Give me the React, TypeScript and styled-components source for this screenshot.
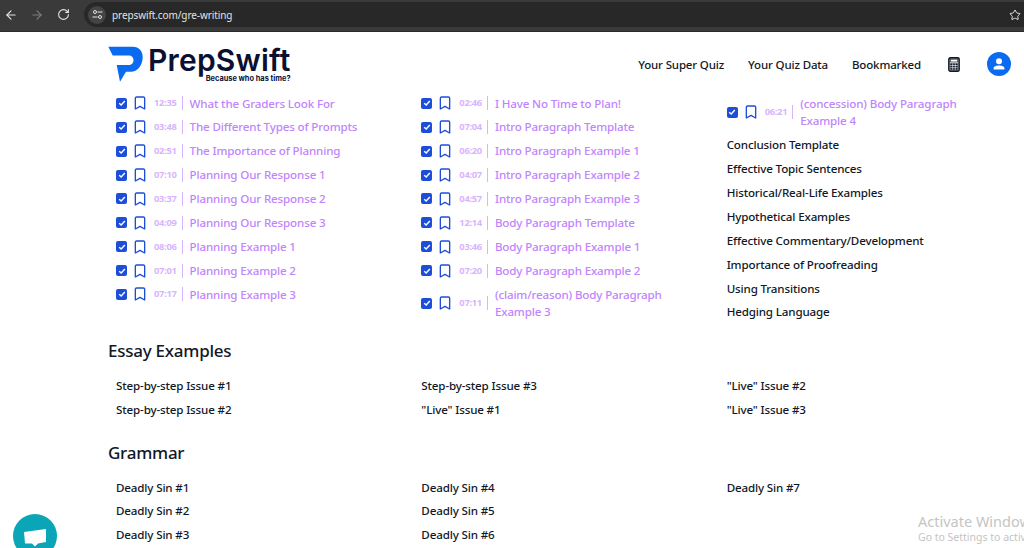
import styled, { createGlobalStyle } from 'styled-components';
import { ArrowLeft, ArrowRight, Bookmark, RotateCw, Star } from 'lucide-react';

interface Lesson {
  time: string;
  title: string;
}

const GlobalStyle = createGlobalStyle`
  html, body {
    margin: 0;
    padding: 0;
    height: 548px;
    overflow: hidden;
    background: #fff;
    font-family: "Noto Sans", "Open Sans", sans-serif;
  }
`;

const BrowserBar = styled.div`
  height: 32px;
  box-sizing: border-box;
  background: #3a3a3a;
  border-bottom: 1px solid #2a2a2a;
  display: flex;
  align-items: stretch;
  padding: 2px 0 4px;
  color: #e3e3e3;
`;

const BarIcon = styled.span<{ $dim?: boolean }>`
  width: 26px;
  padding-right: 4px;
  box-sizing: border-box;
  display: flex;
  align-items: center;
  justify-content: center;
  color: ${(p) => (p.$dim ? '#7c7c7c' : '#e3e3e3')};
`;

const Address = styled.div`
  flex: 1;
  margin-left: 6px;
  background: #282828;
  border-radius: 13px 0 0 13px;
  display: flex;
  align-items: center;
  padding-left: 4px;
  font-size: 10px;
  letter-spacing: -0.1px;
  color: #e3e3e3;
`;

const SiteInfo = styled.span`
  width: 18px;
  height: 18px;
  border-radius: 50%;
  background: #444;
  display: flex;
  align-items: center;
  justify-content: center;
  margin-right: 6px;
`;

const StarBox = styled.span`
  margin-left: auto;
  width: 18px;
  display: flex;
  justify-content: center;
`;

const Page = styled.div`
  padding-left: 108px;
`;

const Header = styled.header`
  height: 59.5px;
  display: flex;
  align-items: flex-start;
  justify-content: space-between;
  padding-right: 13px;
`;

const Logo = styled.div`
  display: flex;
  align-items: flex-start;
  margin-top: 13px;

  svg {
    margin-top: 1px;
  }
`;

const LogoText = styled.div`
  margin-left: 5px;
  display: flex;
  flex-direction: column;
  align-items: flex-end;
`;

const LogoName = styled.span`
  font-family: Inter, sans-serif;
  font-size: 30px;
  line-height: 30px;
  font-weight: 600;
  letter-spacing: 0.2px;
  color: #0b1033;
`;

const LogoTag = styled.span`
  font-family: Inter, sans-serif;
  font-size: 7.4px;
  line-height: 7px;
  font-weight: 700;
  color: #0b1033;
`;

const Nav = styled.nav`
  margin-top: 20px;
  display: flex;
  align-items: center;
  gap: 24px;
  font-size: 11.5px;
  letter-spacing: -0.15px;
  font-weight: 500;
  color: #111827;
`;

const CalcBox = styled.span`
  width: 18px;
  display: flex;
  justify-content: center;
`;

const Avatar = styled.span`
  width: 24px;
  height: 24px;
  border-radius: 50%;
  background: #0b6bf0;
  display: flex;
  align-items: center;
  justify-content: center;
`;

const Columns = styled.div`
  display: grid;
  grid-template-columns: repeat(3, 305.33px);
  padding-left: 8px;
`;

const Row = styled.div`
  display: flex;
  align-items: center;
  padding: 3px 0;
  font-size: 11.6px;
  letter-spacing: -0.15px;
  line-height: 17.875px;
  font-weight: 500;
  color: #111827;
`;

const Check = styled.span`
  width: 11px;
  height: 11px;
  border-radius: 2px;
  background: #1d4ed8;
  flex-shrink: 0;
  display: flex;
  align-items: center;
  justify-content: center;
`;

const Mark = styled(Bookmark)`
  margin-left: 5px;
  color: #1d4ed8;
  flex-shrink: 0;
`;

const Time = styled.span`
  margin-left: 6px;
  font-size: 9.4px;
  letter-spacing: -0.3px;
  font-weight: 700;
  color: #d8b4fe;
  padding-right: 5px;
  line-height: 14px;
  border-right: 1px solid #d8b4fe;
  flex-shrink: 0;
`;

const Title = styled.span`
  margin-left: 7px;
  max-width: 190px;
  color: #c084fc;
`;

const Heading = styled.h2`
  margin: 0;
  font-size: 17px;
  letter-spacing: -0.25px;
  line-height: 24px;
  font-weight: 500;
  color: #111827;
`;

const Section = styled.section`
  margin-top: 14.5px;

  & + & {
    margin-top: 19px;
  }
`;

const SectionRows = styled(Columns)`
  margin-top: 11px;
`;

const ChatBubble = styled.div`
  position: absolute;
  left: 13px;
  top: 514px;
  width: 44px;
  height: 44px;
  border-radius: 50%;
  background: #0aa5b7;
  display: flex;
  justify-content: center;
  padding-top: 15px;
  box-sizing: border-box;
`;

const Watermark = styled.div`
  position: absolute;
  left: 918px;
  right: 0;
  top: 512px;
  overflow: hidden;
  white-space: nowrap;
  color: #c4c4c4;
  font-size: 14.5px;
  line-height: 18px;

  small {
    display: block;
    font-size: 10.5px;
    line-height: 15px;
  }
`;

const LessonRow = ({ time, title }: Lesson) => (
  <Row>
    <Check>
      <svg width="8" height="8" viewBox="0 0 8 8" fill="none">
        <path d="M1.2 4.2 3.2 6 6.8 2" stroke="#fff" strokeWidth="1.4" />
      </svg>
    </Check>
    <Mark size={16} strokeWidth={2} />
    <Time>{time}</Time>
    <Title>{title}</Title>
  </Row>
);

const col1: Lesson[] = [
  { time: '12:35', title: 'What the Graders Look For' },
  { time: '03:48', title: 'The Different Types of Prompts' },
  { time: '02:51', title: 'The Importance of Planning' },
  { time: '07:10', title: 'Planning Our Response 1' },
  { time: '03:37', title: 'Planning Our Response 2' },
  { time: '04:09', title: 'Planning Our Response 3' },
  { time: '08:06', title: 'Planning Example 1' },
  { time: '07:01', title: 'Planning Example 2' },
  { time: '07:17', title: 'Planning Example 3' },
];

const col2: Lesson[] = [
  { time: '02:46', title: 'I Have No Time to Plan!' },
  { time: '07:04', title: 'Intro Paragraph Template' },
  { time: '06:20', title: 'Intro Paragraph Example 1' },
  { time: '04:07', title: 'Intro Paragraph Example 2' },
  { time: '04:57', title: 'Intro Paragraph Example 3' },
  { time: '12:14', title: 'Body Paragraph Template' },
  { time: '03:46', title: 'Body Paragraph Example 1' },
  { time: '07:20', title: 'Body Paragraph Example 2' },
  { time: '07:11', title: '(claim/reason) Body Paragraph Example 3' },
];

const col3 = [
  'Conclusion Template',
  'Effective Topic Sentences',
  'Historical/Real-Life Examples',
  'Hypothetical Examples',
  'Effective Commentary/Development',
  'Importance of Proofreading',
  'Using Transitions',
  'Hedging Language',
];

const essays = [
  ['Step-by-step Issue #1', 'Step-by-step Issue #2'],
  ['Step-by-step Issue #3', '"Live" Issue #1'],
  ['"Live" Issue #2', '"Live" Issue #3'],
];

const grammar = [
  ['Deadly Sin #1', 'Deadly Sin #2', 'Deadly Sin #3'],
  ['Deadly Sin #4', 'Deadly Sin #5', 'Deadly Sin #6'],
  ['Deadly Sin #7'],
];

export default function App() {
  return (
    <>
      <GlobalStyle />
      <BrowserBar>
        <BarIcon><ArrowLeft size={14} /></BarIcon>
        <BarIcon $dim><ArrowRight size={14} /></BarIcon>
        <BarIcon><RotateCw size={13} /></BarIcon>
        <Address>
          <SiteInfo>
            <svg width="11" height="11" viewBox="0 0 11 11" fill="none" stroke="#e3e3e3" strokeWidth="1">
              <circle cx="3" cy="3" r="1.5" />
              <path d="M5.5 3H10.5M0.5 8H5.5" />
              <circle cx="8" cy="8" r="1.5" />
            </svg>
          </SiteInfo>
          prepswift.com/gre-writing
          <StarBox><Star size={12} strokeWidth={2} /></StarBox>
        </Address>
      </BrowserBar>
      <Page>
        <Header>
          <Logo>
            <svg width="35" height="36" viewBox="0 0 35 36">
              <path
                d="M0.3 0.7H25C31 0.7 34.7 5 34.7 11C34.7 20 29 25.7 23 25.7H18L12 35.7L8.7 19H21C24 19 25.5 16.5 25.5 14C25.5 11.5 23.5 9.6 21 9.6H4.7Z"
                fill="#0b6bf0"
              />
            </svg>
            <LogoText>
              <LogoName>PrepSwift</LogoName>
              <LogoTag>Because who has time?</LogoTag>
            </LogoText>
          </Logo>
          <Nav>
            <span>Your Super Quiz</span>
            <span>Your Quiz Data</span>
            <span>Bookmarked</span>
            <CalcBox>
              <svg width="12" height="15" viewBox="0 0 12 15">
                <rect x="0.9" y="0.9" width="10.2" height="13.2" rx="1.4" fill="#fff" stroke="#111827" strokeWidth="1.6" />
                <rect x="2.2" y="2.2" width="7.6" height="2.8" fill="#fff" stroke="#111827" strokeWidth="0.7" />
                <path d="M2.2 6.3H9.8V12.8H2.2Z" fill="#111827" />
                <path d="M4.7 6.3V12.8M7.3 6.3V12.8M2.2 8.5H9.8M2.2 10.7H9.8" stroke="#fff" strokeWidth="0.6" />
              </svg>
            </CalcBox>
            <Avatar>
              <svg width="16" height="16" viewBox="0 0 16 16" fill="#fff">
                <circle cx="8" cy="5.2" r="3" />
                <path d="M2.6 13.4V12C2.6 10.2 5.4 9.4 8 9.4S13.4 10.2 13.4 12V13.4Z" />
              </svg>
            </Avatar>
          </Nav>
        </Header>
        <Columns>
          <div>{col1.map((l) => <LessonRow key={l.time} {...l} />)}</div>
          <div>{col2.map((l) => <LessonRow key={l.time} {...l} />)}</div>
          <div>
            <LessonRow time="06:21" title="(concession) Body Paragraph Example 4" />
            {col3.map((t) => <Row key={t}>{t}</Row>)}
          </div>
        </Columns>
        <Section>
          <Heading>Essay Examples</Heading>
          <SectionRows>
            {essays.map((c) => <div key={c[0]}>{c.map((t) => <Row key={t}>{t}</Row>)}</div>)}
          </SectionRows>
        </Section>
        <Section>
          <Heading>Grammar</Heading>
          <SectionRows>
            {grammar.map((c) => <div key={c[0]}>{c.map((t) => <Row key={t}>{t}</Row>)}</div>)}
          </SectionRows>
        </Section>
      </Page>
      <ChatBubble>
        <svg width="22" height="18" viewBox="0 0 22 18">
          <path d="M0 3 22 0V13L14 14.5 11 17.5 8 14.5 1 14.5Z" fill="#fff" />
        </svg>
      </ChatBubble>
      <Watermark>
        Activate Windows
        <small>Go to Settings to activate Windows.</small>
      </Watermark>
    </>
  );
}
